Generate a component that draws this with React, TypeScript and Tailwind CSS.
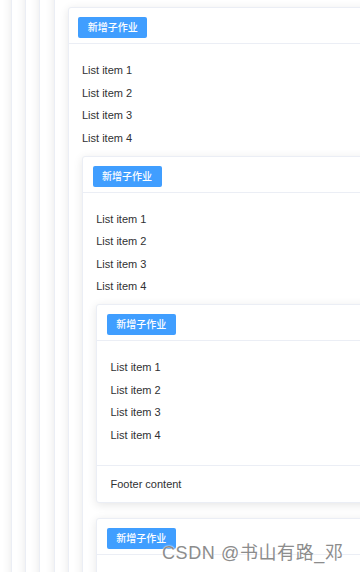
import type { ReactNode } from "react";
import { clsx } from "clsx";

const ITEMS = ["List item 1", "List item 2", "List item 3", "List item 4"];

// 外层只露出左边缘的卡片
function Shell({ children, top = false }: { children: ReactNode; top?: boolean }) {
  return (
    <div className="rounded-[3px] border border-[#ebeef5] bg-white shadow-[0_2px_10px_0_rgba(0,0,0,0.1)]">
      <div className={clsx("pl-[13.25px] pb-[40px]", top ? "pt-[23px]" : "pt-0")}>{children}</div>
    </div>
  );
}

function AddButton() {
  return (
    <button className="h-[21px] w-[69px] rounded-[2px] bg-[#409eff] text-[10px] font-medium leading-[21px] text-white">
      新增子作业
    </button>
  );
}

function WorkCard({ children, footer, items = ITEMS }: { children?: ReactNode; footer?: string; items?: string[] }) {
  return (
    <div className="rounded-[3px] border border-[#ebeef5] bg-white shadow-[0_2px_10px_0_rgba(0,0,0,0.1)]">
      <div className="flex border-b border-[#ebeef5] px-[9.5px] pt-[9px] pb-[5px]">
        <AddButton />
      </div>
      <div className={clsx("px-[13.25px] pt-[15px]", children ? "pb-[15px]" : "pb-[19px]")}>
        <ul>
          {items.map((item) => (
            <li key={item} className="h-[22.5px] text-[11px] leading-[22.5px] text-[#303133]">
              {item}
            </li>
          ))}
        </ul>
        {children && <div className="mt-[6.5px] flex flex-col gap-[15px]">{children}</div>}
      </div>
      {footer && (
        <div className="border-t border-[#ebeef5] px-[13.25px] pt-[7px] pb-[6px] text-[11px] leading-[22.5px] text-[#303133]">
          {footer}
        </div>
      )}
    </div>
  );
}

export default function App() {
  return (
    <div className="relative h-[572px] w-[360px] overflow-hidden bg-white font-['Liberation_Sans','Noto_Sans_CJK_SC',sans-serif]">
      <div className="mt-[-20px] w-[760px] pl-[10.75px]">
        <Shell>
          <Shell>
            <Shell>
              <Shell top>
                <WorkCard>
                  <WorkCard>
                    <WorkCard footer="Footer content" />
                    {/* 最后一张卡片的列表在视口之外 */}
                    <WorkCard items={[]} />
                  </WorkCard>
                </WorkCard>
              </Shell>
            </Shell>
          </Shell>
        </Shell>
      </div>

      {/* 水印 */}
      <div className="absolute left-[162px] top-[540px] text-[18px] leading-[26px] tracking-[0.6px] text-[#8c8c8c] [text-shadow:0_0_2px_#fff,0_0_1px_#fff]">
        CSDN @书山有路_邓
      </div>
    </div>
  );
}
